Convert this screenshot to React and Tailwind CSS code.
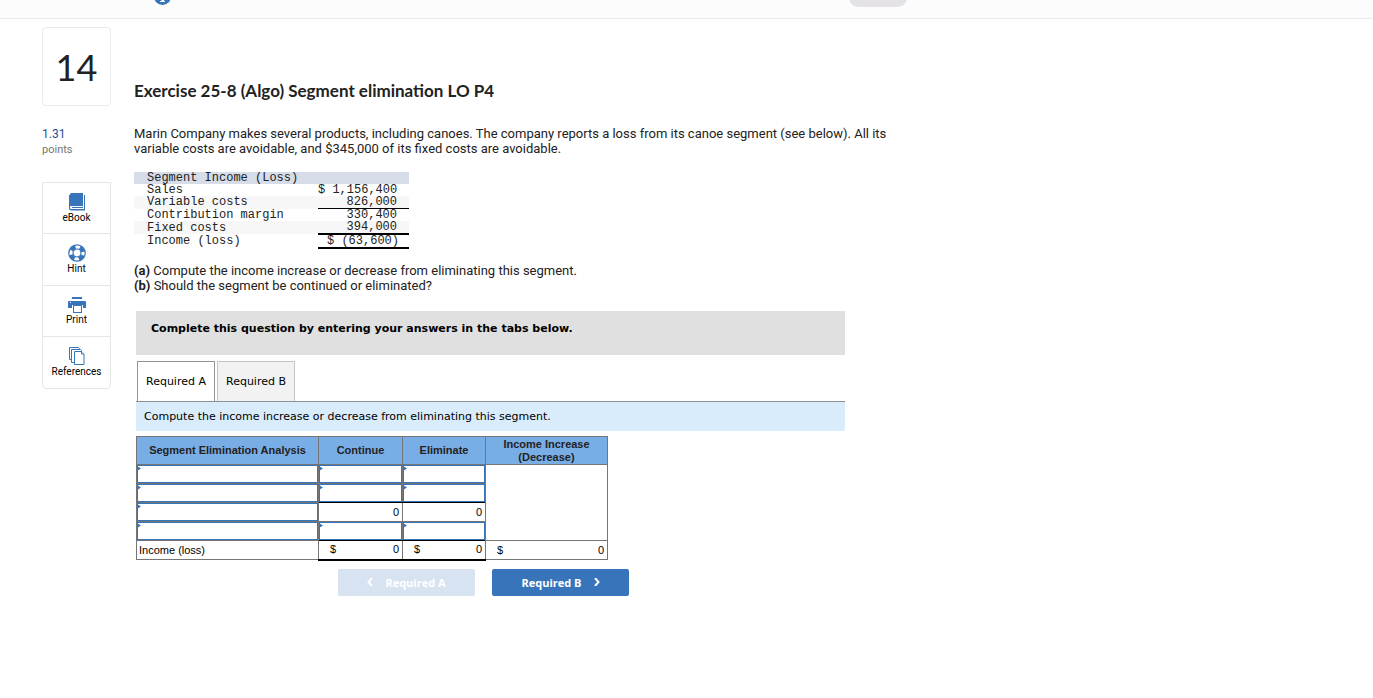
import { useState } from "react";

function BookIcon() {
  return (
    <svg viewBox="0 0 18 18" className="size-[18px]" fill="#3874ba" aria-hidden="true">
      <path d="M3.500 0H15v13H3.500Q2.500 13 2 13.500V1.500Q2 0 3.500 0Z" />
      <path d="M16 2h1v15.500H3.500Q1 17.500 1 15V2h1v12.500q0 1.500 1.500 1.500H16Z" />
      <path d="M4 14h11v1H4Z" />
    </svg>
  );
}

function HintIcon() {
  return (
    <svg viewBox="0 0 18 18" className="size-[18px]" fill="none" aria-hidden="true">
      <circle cx="9" cy="9" r="8.200" stroke="#3874ba" strokeWidth="1.200" />
      <circle cx="9" cy="9" r="4" stroke="#3874ba" strokeWidth="1.200" />
      <circle cx="9" cy="9" r="6.200" stroke="#3874ba" strokeWidth="4" strokeDasharray="5.200 4.539" strokeDashoffset="-2.270" />
    </svg>
  );
}

function PrintIcon() {
  return (
    <svg viewBox="0 0 18 16" className="h-4 w-[18px]" fill="#3874ba" aria-hidden="true">
      <path d="M4 0h10v2H4Z" />
      <path d="M1 4h16q1 0 1 1v6h-3V8H4v3H0V5q0-1 1-1Z" />
      <path fillRule="evenodd" d="M5 8h9v8H5ZM6 9v6h7V9Z" />
      <path d="M2 5h1v1H2Z" fill="#fff" />
    </svg>
  );
}

function ReferencesIcon() {
  return (
    <svg viewBox="0 0 18 18" className="size-[18px]" fill="#fff" stroke="#3874ba" aria-hidden="true">
      <path d="M1.500.5h9l1 1v11h-10Z" />
      <path d="M3.500 2.500h9l1 1v12h-10Z" />
      <path d="M6.500 4.500h7l2.500 2.500v10.500h-9.500Z" />
      <path d="M13.500 4.500v2.500h2.500" />
    </svg>
  );
}

const tools = [
  { label: "eBook", icon: <BookIcon /> },
  { label: "Hint", icon: <HintIcon /> },
  { label: "Print", icon: <PrintIcon /> },
  { label: "References", icon: <ReferencesIcon /> },
];

function Entry({ label }) {
  return (
    <span className="relative block">
      <input
        aria-label={label}
        className="block h-[18px] w-full border border-[#3874ba] bg-white px-1 text-[11px] outline-none"
      />
      <svg viewBox="0 0 4 5" className="absolute top-px left-0 h-[5px] w-1" fill="#3874ba" aria-hidden="true">
        <path d="M0 0 4 2.500 0 5Z" />
      </svg>
    </span>
  );
}

function Amount({ value }) {
  return (
    <span className="flex justify-between pr-[3px] pl-[11px]">
      <span>$</span>
      <span>{value}</span>
    </span>
  );
}

const cell = "border border-[#757575] p-0";

function AnalysisTable() {
  return (
    <table className="mt-[5px] w-[472px] table-fixed border-collapse font-['Liberation_Sans',sans-serif] text-[11px] leading-[13px] text-black">
      <colgroup>
        <col className="w-[182px]" />
        <col className="w-[84px]" />
        <col className="w-[83px]" />
        <col />
      </colgroup>
      <thead>
        <tr className="h-7 bg-[#79ade6] text-[#222]">
          <th scope="col" className={cell}>Segment Elimination Analysis</th>
          <th scope="col" className={cell}>Continue</th>
          <th scope="col" className={cell}>Eliminate</th>
          <th scope="col" className="border border-[#757575] px-2">Income Increase (Decrease)</th>
        </tr>
      </thead>
      <tbody>
        <tr>
          <td className={cell}><Entry label="Line 1" /></td>
          <td className={cell}><Entry label="Line 1 continue" /></td>
          <td className={cell}><Entry label="Line 1 eliminate" /></td>
          <td className={cell} rowSpan={4}></td>
        </tr>
        <tr>
          <td className={cell}><Entry label="Line 2" /></td>
          <td className="border border-[#757575] border-b-black p-0"><Entry label="Line 2 continue" /></td>
          <td className="border border-[#757575] border-b-black p-0"><Entry label="Line 2 eliminate" /></td>
        </tr>
        <tr>
          <td className={cell}><Entry label="Line 3" /></td>
          <td className="border border-[#757575] border-t-black pr-[3px] text-right">0</td>
          <td className="border border-[#757575] border-t-black pr-[3px] text-right">0</td>
        </tr>
        <tr>
          <td className={cell}><Entry label="Line 4" /></td>
          <td className="border border-[#757575] border-b-black p-0"><Entry label="Line 4 continue" /></td>
          <td className="border border-[#757575] border-b-black p-0"><Entry label="Line 4 eliminate" /></td>
        </tr>
        <tr className="h-[19px]">
          <td className="border border-[#757575] pl-0.5">Income (loss)</td>
          <td className="border border-b-2 border-[#757575] border-t-black border-b-black p-0"><Amount value="0" /></td>
          <td className="border border-b-2 border-[#757575] border-t-black border-b-black p-0"><Amount value="0" /></td>
          <td className={cell}><Amount value="0" /></td>
        </tr>
      </tbody>
    </table>
  );
}

function SegmentTable() {
  return (
    <table className="mt-4 w-[275px] table-fixed border-collapse font-['Liberation_Mono',monospace] text-[12px] leading-3 text-[#222]">
      <colgroup>
        <col />
        <col className="w-[91px]" />
      </colgroup>
      <thead>
        <tr className="bg-[#d6dce8]">
          <th scope="col" colSpan={2} className="pl-[13px] text-left font-normal">Segment Income (Loss)</th>
        </tr>
      </thead>
      <tbody>
        <tr>
          <td className="pl-[13px]">Sales</td>
          <td className="pr-3 text-right whitespace-nowrap">$ 1,156,400</td>
        </tr>
        <tr className="bg-[#f7f7f7]">
          <td className="pl-[13px]">Variable costs</td>
          <td className="border-b border-black pr-3 text-right">826,000</td>
        </tr>
        <tr>
          <td className="pl-[13px]">Contribution margin</td>
          <td className="pr-3 text-right">330,400</td>
        </tr>
        <tr className="bg-[#f7f7f7]">
          <td className="pl-[13px]">Fixed costs</td>
          <td className="border-b-2 border-black pr-3 text-right">394,000</td>
        </tr>
        <tr>
          <td className="pl-[13px]">Income (loss)</td>
          <td className="border-b-2 border-black pr-2.5 text-right whitespace-nowrap">$ (63,600)</td>
        </tr>
      </tbody>
    </table>
  );
}

export default function App() {
  const [tab, setTab] = useState("A");
  const active = "bg-white border-[#919191]";
  const idle = "bg-[#f2f2f2] border-[#c4c4c4]";
  return (
    <div className="min-h-screen bg-white font-['Roboto',sans-serif] text-[#222]">
      <header className="h-[19px] overflow-hidden border-b border-[#ececec] bg-[#fcfcfc]">
        <div className="-mt-3 flex items-end pl-[154px]">
          <button aria-label="Information" className="mb-0.5 size-[17px] rounded-full bg-[#3874ba]">
            <svg viewBox="0 0 17 17" className="size-[17px]" fill="#fff" aria-hidden="true">
              <path d="M7 6h3v7h1v1H6v-1h1.500V7H7ZM7 3h2v2H7Z" />
            </svg>
          </button>
          <span className="ml-[678px] h-[19px] w-[58px] rounded-full bg-[#e4e2e6]" />
        </div>
      </header>
      <div className="flex items-start pt-2 pl-[42px]">
        <aside className="w-[69px] shrink-0">
          <div className="flex h-[79px] items-center justify-center rounded border border-[#ebebeb] font-['Lato',sans-serif] text-[36px]">14</div>
          <div className="mt-5 text-[12px] leading-4 text-[#1d4f91]">1.31</div>
          <div className="text-[11px] leading-4 text-[#757575]">points</div>
          <nav className="mt-6 grid min-h-[207px] auto-rows-fr divide-y divide-[#e6e6e6] rounded-b border border-[#e6e6e6]">
            {tools.map((tool) => (
              <a key={tool.label} href="#" className="flex flex-col items-center justify-center text-[10px] leading-3 text-black">
                <span className="flex h-[19px] items-center">{tool.icon}</span>
                {tool.label}
              </a>
            ))}
          </nav>
        </aside>
        <main className="ml-[23px] max-w-[760px] flex-1 pt-[54px] text-[13px] leading-[15px]">
          <h1 className="font-['Lato',sans-serif] text-[17px] leading-5 font-bold">Exercise 25-8 (Algo) Segment elimination LO P4</h1>
          <p className="mt-[25px]">
            Marin Company makes several products, including canoes. The company reports a loss from its canoe segment (see below). All its variable costs are avoidable, and $345,000 of its fixed costs are avoidable.
          </p>
          <SegmentTable />
          <p className="mt-3.5">
            <b>(a)</b> Compute the income increase or decrease from eliminating this segment.
            <br />
            <b>(b)</b> Should the segment be continued or eliminated?
          </p>
          <section className="mt-[18px] ml-0.5 max-w-[709px] font-['DejaVu_Sans',sans-serif] text-[11px] text-black">
            <h2 className="bg-[#e0e0e0] px-[15px] pt-2.5 pb-[19px] font-bold">
              Complete this question by entering your answers in the tabs below.
            </h2>
            <div role="tablist" className="mt-1.5 flex gap-0.5 pl-px">
              <button role="tab" aria-selected={tab === "A"} onClick={() => setTab("A")} className={`h-10 w-[78px] border border-b-0 whitespace-nowrap ${tab === "A" ? active : idle}`}>
                Required A
              </button>
              <button role="tab" aria-selected={tab === "B"} onClick={() => setTab("B")} className={`h-10 w-[78px] border border-b-0 whitespace-nowrap ${tab === "B" ? active : idle}`}>
                Required B
              </button>
            </div>
            <p className="border-t border-[#919191] bg-[#d9ecfb] px-2 py-[7px]">
              Compute the income increase or decrease from eliminating this segment.
            </p>
            <AnalysisTable />
            <div className="mt-2 flex gap-[17px] pl-[202px] font-['Open_Sans',sans-serif] font-bold text-white">
              <button className="flex h-[27px] w-[137px] items-center justify-center gap-3 rounded-[2px] bg-[#d7e3f1]">
                <svg viewBox="0 0 6 8" className="h-2 w-1.5" fill="none" stroke="currentColor" strokeWidth="2" aria-hidden="true"><path d="M5 0 1.500 4 5 8" /></svg>
                Required A
              </button>
              <button className="flex h-[27px] w-[137px] items-center justify-center gap-3 rounded-[2px] bg-[#3874ba]">
                Required B
                <svg viewBox="0 0 6 8" className="h-2 w-1.5" fill="none" stroke="currentColor" strokeWidth="2" aria-hidden="true"><path d="M1 0 4.500 4 1 8" /></svg>
              </button>
            </div>
          </section>
        </main>
      </div>
    </div>
  );
}
